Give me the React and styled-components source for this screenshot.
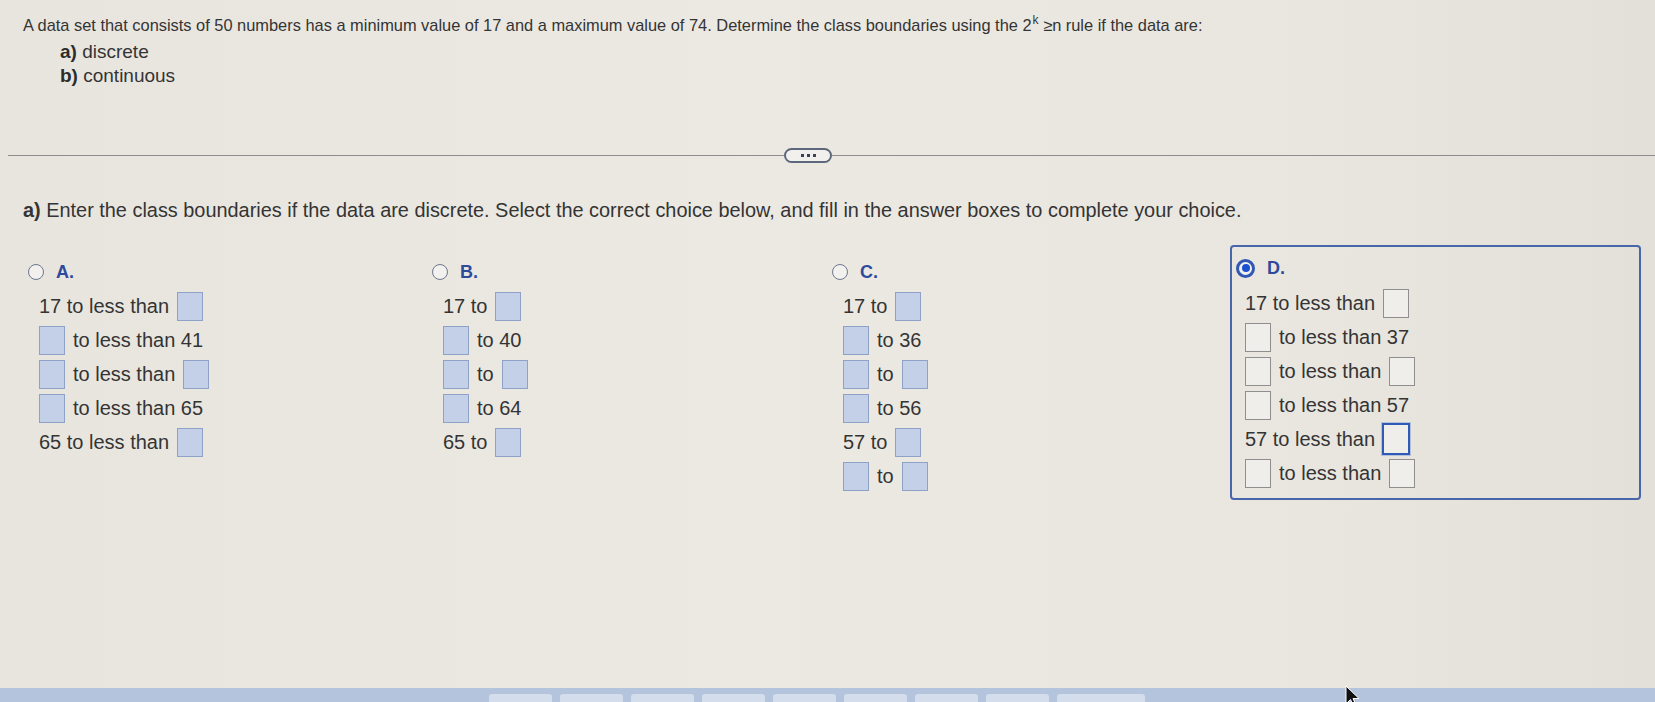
import React from "react"
import styled, { createGlobalStyle, css } from "styled-components"

const Global = createGlobalStyle`
    html, body {
        margin: 0;
        padding: 0;
        background: #e8e6e0;
    }
    * {
        box-sizing: border-box;
    }
`

const Page = styled.div`
    position: relative;
    min-height: 702px;
    display: flex;
    flex-direction: column;
    overflow: hidden;
    background: linear-gradient(to right, #e8e5df 0%, #ece9e3 45%, #e9e6e0 80%, #e2e0d9 100%);
    color: #343434;
    font-family: "Liberation Sans", Arial, sans-serif;
`

const Question = styled.div`
    padding: 13px 0 0 23px;
`

const Title = styled.div`
    font-size: 16.4px;
    line-height: 24px;
    height: 27px;

    sup {
        font-size: 12px;
        line-height: 0;
        vertical-align: 7px;
        margin-left: 1px;
    }
`

const SubItem = styled.div`
    font-size: 19px;
    line-height: 24px;
    padding-left: 37px;

    b {
        font-weight: bold;
        color: #2c2c2c;
    }
`

const Separator = styled.div`
    display: flex;
    align-items: center;
    margin-top: 60px;
    padding-left: 8px;
`

const Rule = styled.div`
    height: 1px;
    background: #8d8d8d;
    flex: ${(p) => (p.$grow ? "1 1 auto" : "0 0 776px")};
`

const Pill = styled.div`
    width: 48px;
    height: 15px;
    border: 2px solid #5e687c;
    border-radius: 8px;
    background: #f1f0ec;
    display: flex;
    align-items: center;
    justify-content: center;
    gap: 3px;

    span {
        width: 3px;
        height: 3px;
        background: #3c4354;
    }
`

const Prompt = styled.div`
    margin-top: 35px;
    padding-left: 23px;
    font-size: 19.9px;
    line-height: 24px;

    b {
        font-weight: bold;
    }
`

const Choices = styled.div`
    display: grid;
    grid-template-columns: 404px 400px 404px 411px;
    align-items: start;
    margin-top: 23px;
    padding-left: 22px;
`

const Choice = styled.div`
    padding: 16px 3px 10px;
    border: 2px solid transparent;
    border-radius: 4px;

    ${(p) =>
        p.$selected &&
        css`
            padding-top: 12px;
            border-color: #4766ab;
        `}
`

const ChoiceHead = styled.div`
    display: flex;
    align-items: center;
    gap: 12px;
    height: 18px;
    margin-bottom: ${(p) => (p.$selected ? "11px" : "10px")};
    padding-left: ${(p) => (p.$selected ? "1px" : "1px")};
`

const Radio = styled.span`
    display: inline-flex;
    align-items: center;
    justify-content: center;
    width: ${(p) => (p.$on ? "19px" : "16px")};
    height: ${(p) => (p.$on ? "19px" : "16px")};
    border-radius: 50%;
    border: ${(p) => (p.$on ? "3px solid #3058b4" : "1.5px solid #6c778f")};
    background: #f2f1ee;

    &::after {
        content: "";
        display: ${(p) => (p.$on ? "block" : "none")};
        width: 8px;
        height: 8px;
        border-radius: 50%;
        background: #1b4fd4;
    }
`

const Letter = styled.span`
    font-size: 18px;
    font-weight: bold;
    color: #2d4a9c;
`

const Rows = styled.div`
    display: flex;
    flex-direction: column;
    gap: 4px;
    padding-left: ${(p) => (p.$selected ? "10px" : "12px")};
`

const Row = styled.div`
    display: flex;
    align-items: center;
    gap: 8px;
    height: 30px;
    font-size: 20px;
    white-space: nowrap;
`

const Box = styled.span`
    display: inline-block;
    flex: 0 0 auto;
    width: 26px;
    height: 29px;
    ${(p) =>
        p.$kind === "filled" &&
        css`
            background: #c3d0e8;
            border: 1px solid #8ea2c8;
        `}
    ${(p) =>
        p.$kind === "empty" &&
        css`
            background: #efeeea;
            border: 1px solid #8f8f8f;
        `}
    ${(p) =>
        p.$kind === "focus" &&
        css`
            width: 28px;
            height: 32px;
            margin-left: -1px;
            background: #efeeea;
            border: 2px solid #2f5bb7;
            box-shadow: 0 0 0 1px rgba(90, 130, 210, 0.35);
        `}
`

const Dock = styled.div`
    margin-top: auto;
    height: 14px;
    background: #b4c4dc;
    display: flex;
    align-items: flex-end;
    gap: 8px;
    padding-left: 489px;
`

const Key = styled.div`
    width: ${(p) => p.$w || 63}px;
    height: 8px;
    border-radius: 3px 3px 0 0;
    background: #d3ddec;
`

const Pointer = styled.svg`
    position: absolute;
    left: 1345px;
    top: 685px;
`

// B = blue answer box, E = empty box of the chosen answer, F = focused box
const choices = [
    {
        letter: "A",
        rows: [
            ["17 to less than", "B"],
            ["B", "to less than 41"],
            ["B", "to less than", "B"],
            ["B", "to less than 65"],
            ["65 to less than", "B"],
        ],
    },
    {
        letter: "B",
        rows: [
            ["17 to", "B"],
            ["B", "to 40"],
            ["B", "to", "B"],
            ["B", "to 64"],
            ["65 to", "B"],
        ],
    },
    {
        letter: "C",
        rows: [
            ["17 to", "B"],
            ["B", "to 36"],
            ["B", "to", "B"],
            ["B", "to 56"],
            ["57 to", "B"],
            ["B", "to", "B"],
        ],
    },
    {
        letter: "D",
        selected: true,
        rows: [
            ["17 to less than", "E"],
            ["E", "to less than 37"],
            ["E", "to less than", "E"],
            ["E", "to less than 57"],
            ["57 to less than", "F"],
            ["E", "to less than", "E"],
        ],
    },
]

const kinds = { B: "filled", E: "empty", F: "focus" }

function Item({ part }) {
    if (kinds[part]) return <Box $kind={kinds[part]} />
    return <span>{part}</span>
}

export default function App() {
    return (
        <Page>
            <Global />
            <Question>
                <Title>
                    A data set that consists of 50 numbers has a minimum value of 17 and a maximum value of 74. Determine the class
                    boundaries using the 2<sup>k</sup> ≥n rule if the data are:
                </Title>
                <SubItem>
                    <b>a)</b> discrete
                </SubItem>
                <SubItem>
                    <b>b)</b> continuous
                </SubItem>
            </Question>

            <Separator>
                <Rule />
                <Pill>
                    <span />
                    <span />
                    <span />
                </Pill>
                <Rule $grow />
            </Separator>

            <Prompt>
                <b>a)</b> Enter the class boundaries if the data are discrete. Select the correct choice below, and fill in the answer
                boxes to complete your choice.
            </Prompt>

            <Choices>
                {choices.map((c) => (
                    <Choice key={c.letter} $selected={c.selected}>
                        <ChoiceHead $selected={c.selected}>
                            <Radio $on={c.selected} />
                            <Letter>{c.letter}.</Letter>
                        </ChoiceHead>
                        <Rows $selected={c.selected}>
                            {c.rows.map((r, i) => (
                                <Row key={i}>
                                    {r.map((part, j) => (
                                        <Item key={j} part={part} />
                                    ))}
                                </Row>
                            ))}
                        </Rows>
                    </Choice>
                ))}
            </Choices>

            <Dock>
                <Key />
                <Key />
                <Key />
                <Key />
                <Key />
                <Key />
                <Key />
                <Key />
                <Key $w={88} />
            </Dock>

            <Pointer width="16" height="22" viewBox="0 0 16 22">
                <path d="M1 1 L1 19 L5.5 14.5 L8.5 21 L11 20 L8 13.5 L14 13.5 Z" fill="#111" stroke="#fff" strokeWidth="1" />
            </Pointer>
        </Page>
    )
}
